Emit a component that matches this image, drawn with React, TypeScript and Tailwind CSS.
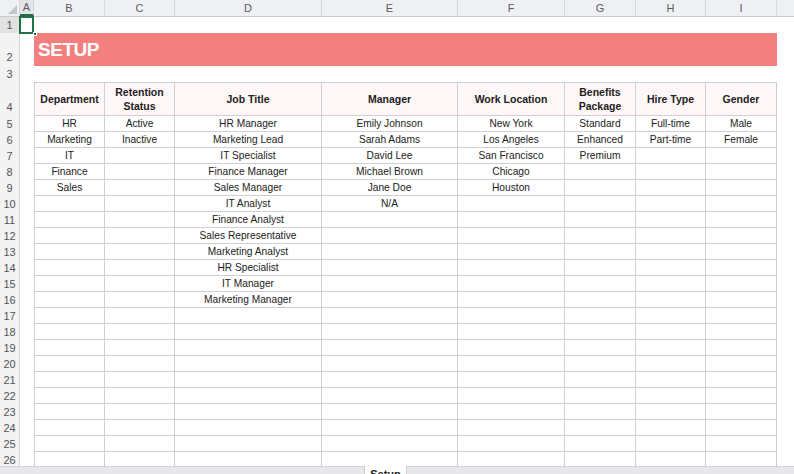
import React from "react";

const cols = [
  { key: "B", w: "w-[71px]" },
  { key: "C", w: "w-[70px]" },
  { key: "D", w: "w-[147px]" },
  { key: "E", w: "w-[136px]" },
  { key: "F", w: "w-[107px]" },
  { key: "G", w: "w-[71px]" },
  { key: "H", w: "w-[70px]" },
  { key: "I", w: "w-[71px]" },
];

const headers = [
  "Department",
  "Retention Status",
  "Job Title",
  "Manager",
  "Work Location",
  "Benefits Package",
  "Hire Type",
  "Gender",
];

const data: string[][] = [
  ["HR", "Marketing", "IT", "Finance", "Sales"],
  ["Active", "Inactive"],
  [
    "HR Manager",
    "Marketing Lead",
    "IT Specialist",
    "Finance Manager",
    "Sales Manager",
    "IT Analyst",
    "Finance Analyst",
    "Sales Representative",
    "Marketing Analyst",
    "HR Specialist",
    "IT Manager",
    "Marketing Manager",
  ],
  ["Emily Johnson", "Sarah Adams", "David Lee", "Michael Brown", "Jane Doe", "N/A"],
  ["New York", "Los Angeles", "San Francisco", "Chicago", "Houston"],
  ["Standard", "Enhanced", "Premium"],
  ["Full-time", "Part-time"],
  ["Male", "Female"],
];

const bodyRows = Array.from({ length: 22 }, (_, i) => i);

function RowNum({ n, end, active }: { n: number; end?: boolean; active?: boolean }) {
  return (
    <div
      className={`w-[20px] shrink-0 flex justify-center text-[11px] leading-none text-[#555] border-r ${
        active ? "bg-[#e2e2e2] border-[#217346]" : "bg-[#f3f3f3] border-[#d6d6d6]"
      } ${end ? "items-end pb-[3px]" : "items-center pt-[1px]"}`}
    >
      {n}
    </div>
  );
}

export default function App() {
  return (
    <div className="w-[794px] h-[474px] overflow-hidden bg-white flex flex-col font-['Liberation_Sans',Arial,sans-serif] text-[#222]">
      <div className="h-[466px] overflow-hidden flex flex-col">
        {/* column letters */}
        <div className="flex h-[17px] shrink-0 bg-[#eef0f3] border-b border-[#c9cbce] text-[11px] text-[#5c5c5c]">
          <div className="w-[20px] shrink-0 border-r border-[#d6d8db] relative">
            <svg className="absolute right-[2px] bottom-[2px]" width="9" height="9" viewBox="0 0 9 9">
              <path d="M9 0 L9 9 L0 9 Z" fill="#c4c6c9" />
            </svg>
          </div>
          <div className="w-[14px] shrink-0 flex items-center justify-center bg-[#e3e5e8] border-b-2 border-[#217346] border-r border-r-[#d6d8db]">
            A
          </div>
          {cols.map((c) => (
            <div key={c.key} className={`${c.w} shrink-0 flex items-center justify-center border-r border-[#d6d8db]`}>
              {c.key}
            </div>
          ))}
          <div className="flex-1" />
        </div>

        {/* row 1 */}
        <div className="flex h-[16px] shrink-0">
          <RowNum n={1} active />
          <div className="w-[14px] shrink-0 relative">
            <div className="absolute -left-[1px] -top-[1px] w-[15px] h-[18px] border-2 border-[#217346]" />
            <div className="absolute -right-[3px] -bottom-[3px] w-[4px] h-[4px] bg-[#217346] border border-white" />
          </div>
          <div className="flex-1" />
        </div>

        {/* row 2 - title band */}
        <div className="flex h-[33px] shrink-0">
          <RowNum n={2} end />
          <div className="w-[14px] shrink-0" />
          <div className="w-[743px] shrink-0 bg-[#f47f7f] flex items-center pl-[4px] pt-[2px] text-white font-bold text-[19px] tracking-tight">
            SETUP
          </div>
          <div className="flex-1" />
        </div>

        {/* row 3 */}
        <div className="flex h-[16px] shrink-0">
          <RowNum n={3} />
          <div className="flex-1" />
        </div>

        {/* row 4 - headers */}
        <div className="flex h-[34px] shrink-0">
          <RowNum n={4} end />
          <div className="w-[14px] shrink-0" />
          {cols.map((c, i) => (
            <div
              key={c.key}
              className={`${c.w} shrink-0 flex items-center justify-center text-center font-bold text-[10.5px] leading-[14px] bg-[#fef7f7] border-t border-r border-b border-[#cfcfcf] ${
                i === 0 ? "border-l" : ""
              } ${i === 1 || i === 5 ? "px-[10px]" : ""}`}
            >
              {headers[i]}
            </div>
          ))}
          <div className="flex-1" />
        </div>

        {/* body rows */}
        {bodyRows.map((r) => (
          <div key={r} className="flex h-[16px] shrink-0">
            <RowNum n={r + 5} />
            <div className="w-[14px] shrink-0" />
            {cols.map((c, i) => (
              <div
                key={c.key}
                className={`${c.w} shrink-0 flex items-center justify-center pt-[2px] text-[10.2px] leading-none border-r border-b border-[#cfcfcf] ${
                  i === 0 ? "border-l" : ""
                }`}
              >
                {data[i][r] ?? ""}
              </div>
            ))}
            <div className="flex-1" />
          </div>
        ))}
      </div>

      {/* sheet tab bar */}
      <div className="h-[8px] flex bg-[#e8e8ec] border-t border-[#d4d4d8]">
        <div className="w-[364px] shrink-0" />
        <div className="w-[43px] shrink-0 bg-white -mt-[1px] border-l border-r border-[#cfcfd4] flex justify-center overflow-hidden">
          <span className="text-[11px] font-bold leading-none pt-[3px] text-[#222]">Setup</span>
        </div>
        <div className="flex-1" />
      </div>
    </div>
  );
}
